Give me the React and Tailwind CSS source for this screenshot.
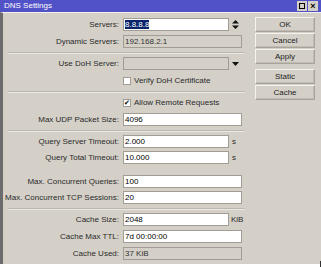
import React from "react";

const font = { fontFamily: '"Liberation Sans", Arial, sans-serif' };

const Field = ({ value, w = "w-[119px]", disabled, selected }) => (
    <div
        className={`${w} h-[13px] border border-[#a19d95] px-[1px] text-[8px] leading-[11px] whitespace-nowrap overflow-hidden ${
            disabled ? "bg-[#d4d0c8] text-[#333]" : "bg-white text-black"
        }`}
    >
        {selected ? <span className="bg-[#0a246a] text-white">{value}</span> : value}
    </div>
);

const Row = ({ label, children }) => (
    <div className="flex items-center h-[13px]">
        <div className="w-[120px] pr-[4px] text-right text-[8px] leading-[13px] text-[#2a2a2a] whitespace-nowrap">
            {label}
        </div>
        {children}
    </div>
);

const Check = ({ label, checked }) => (
    <div className="flex items-center h-[13px] pl-[120px]">
        <div className="w-[8px] h-[8px] bg-white border border-[#a19d95] flex items-center justify-center text-[7px] leading-none text-black">
            {checked ? "✔" : ""}
        </div>
        <span className="ml-[3px] text-[8px] text-[#2a2a2a] leading-[13px]">{label}</span>
    </div>
);

const Sep = ({ className = "" }) => (
    <div className={`ml-[5px] w-[237px] border-t border-[#bcb8b0] border-b border-b-[#ebe9e4] ${className}`} />
);

const Suffix = ({ children }) => (
    <div className="w-[13px] pl-[3px] text-[8px] leading-[13px] text-[#2a2a2a]">{children}</div>
);

const Btn = ({ label }) => (
    <div className="h-[15px] w-[60px] border border-[#a8a49c] border-t-[#f4f3f0] border-l-[#f4f3f0] bg-[#d4d0c8] shadow-[inset_-1px_-1px_0_#c0bcb4] text-[8px] leading-[13px] text-center text-[#222]">
        {label}
    </div>
);

export default function App() {
    return (
        <div className="w-[321px] h-[267px] bg-white relative overflow-hidden" style={font}>
            <div className="h-[264px] bg-[#d4d0c8] flex flex-col">
                {/* title bar */}
                <div className="h-[12px] bg-[#5252c8] flex items-center justify-between pl-[4px] pr-[3px] shrink-0">
                    <span className="text-white text-[8px] leading-[12px]">DNS Settings</span>
                    <div className="flex gap-[1px]">
                        <div className="w-[10px] h-[10px] bg-[#d4d0c8] flex items-center justify-center">
                            <div className="w-[6px] h-[6px] border border-black" />
                        </div>
                        <div className="w-[10px] h-[10px] bg-[#d4d0c8] flex items-center justify-center text-[9px] leading-none font-bold text-black">
                            ×
                        </div>
                    </div>
                </div>
                <div className="flex flex-1 border-l-[3px] border-[#6b6b6b] border-t border-t-[#f2f1ee]">
                    {/* form */}
                    <div className="w-[252px] flex flex-col pt-[5px]">
                        <Row label="Servers:">
                            <Field value="8.8.8.8" w="w-[106px]" selected />
                            <div className="w-[13px] flex flex-col items-center justify-center leading-none">
                                <svg width="7" height="9" viewBox="0 0 7 9">
                                    <path d="M3.5 0 L7 3.5 L0 3.5 Z M0 5.5 L7 5.5 L3.5 9 Z" fill="#111" />
                                </svg>
                            </div>
                        </Row>
                        <div className="mt-[4px]">
                            <Row label="Dynamic Servers:">
                                <Field value="192.168.2.1" disabled />
                            </Row>
                        </div>
                        <Sep className="mt-[4px]" />
                        <div className="mt-[3px]">
                            <Row label="Use DoH Server:">
                                <Field value="" w="w-[106px]" disabled />
                                <div className="w-[13px] flex items-center justify-center">
                                    <svg width="7" height="4" viewBox="0 0 7 4">
                                        <path d="M0 0 L7 0 L3.5 4 Z" fill="#111" />
                                    </svg>
                                </div>
                            </Row>
                        </div>
                        <div className="mt-[4px]">
                            <Check label="Verify DoH Certificate" />
                        </div>
                        <Sep className="mt-[4px]" />
                        <div className="mt-[3px]">
                            <Check label="Allow Remote Requests" checked />
                        </div>
                        <div className="mt-[4px]">
                            <Row label="Max UDP Packet Size:">
                                <Field value="4096" />
                            </Row>
                        </div>
                        <Sep className="mt-[4px]" />
                        <div className="mt-[3px]">
                            <Row label="Query Server Timeout:">
                                <Field value="2.000" w="w-[106px]" />
                                <Suffix>s</Suffix>
                            </Row>
                        </div>
                        <div className="mt-[3px]">
                            <Row label="Query Total Timeout:">
                                <Field value="10.000" w="w-[106px]" />
                                <Suffix>s</Suffix>
                            </Row>
                        </div>
                        <div className="mt-[11px]">
                            <Row label="Max. Concurrent Queries:">
                                <Field value="100" />
                            </Row>
                        </div>
                        <div className="mt-[3px]">
                            <Row label="Max. Concurrent TCP Sessions:">
                                <Field value="20" />
                            </Row>
                        </div>
                        <Sep className="mt-[4px]" />
                        <div className="mt-[3px]">
                            <Row label="Cache Size:">
                                <Field value="2048" w="w-[106px]" />
                                <div className="pl-[2px] text-[8px] leading-[13px] text-[#2a2a2a]">KiB</div>
                            </Row>
                        </div>
                        <div className="mt-[4px]">
                            <Row label="Cache Max TTL:">
                                <Field value="7d 00:00:00" />
                            </Row>
                        </div>
                        <div className="mt-[4px]">
                            <Row label="Cache Used:">
                                <Field value="37 KiB" disabled />
                            </Row>
                        </div>
                    </div>
                    {/* buttons */}
                    <div className="flex flex-col pt-[4px] gap-[1px]">
                        <Btn label="OK" />
                        <Btn label="Cancel" />
                        <Btn label="Apply" />
                        <div className="h-[3px]" />
                        <Btn label="Static" />
                        <Btn label="Cache" />
                    </div>
                </div>
            </div>
            <div className="absolute right-0 bottom-0 w-[1px] h-[6px] bg-[#333]" />
        </div>
    );
}
